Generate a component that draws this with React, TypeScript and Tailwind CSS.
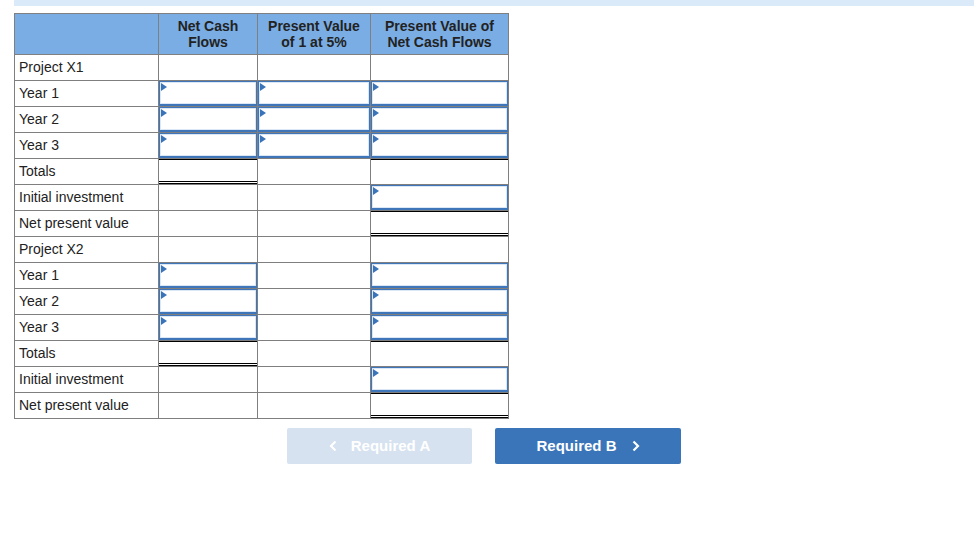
import * as React from "react";

type Cell = "empty" | "input" | "total" | "topline";

type Row = { label: string; cells: [Cell, Cell, Cell] };

const rows: Row[] = [
  { label: "Project X1", cells: ["empty", "empty", "empty"] },
  { label: "Year 1", cells: ["input", "input", "input"] },
  { label: "Year 2", cells: ["input", "input", "input"] },
  { label: "Year 3", cells: ["input", "input", "input"] },
  { label: "Totals", cells: ["total", "empty", "topline"] },
  { label: "Initial investment", cells: ["empty", "empty", "input"] },
  { label: "Net present value", cells: ["empty", "empty", "total"] },
  { label: "Project X2", cells: ["empty", "empty", "empty"] },
  { label: "Year 1", cells: ["input", "empty", "input"] },
  { label: "Year 2", cells: ["input", "empty", "input"] },
  { label: "Year 3", cells: ["input", "empty", "input"] },
  { label: "Totals", cells: ["total", "empty", "topline"] },
  { label: "Initial investment", cells: ["empty", "empty", "input"] },
  { label: "Net present value", cells: ["empty", "empty", "total"] },
];

function InputBox() {
  return (
    <div className="relative h-full w-full border border-b-2 border-[#3f76ba] bg-white shadow-[inset_0_0_0_1px_#dbe7f5]">
      <span className="absolute left-[1px] top-[1px] h-0 w-0 border-y-[4px] border-l-[6px] border-y-transparent border-l-[#3b73b9]" />
    </div>
  );
}

function DataCell({ kind }: { kind: Cell }) {
  return (
    <div className="h-[26px] border-r border-b border-[#7f7f7f]">
      {kind === "input" && <InputBox />}
      {kind === "total" && <div className="h-full border-t border-b-[3px] border-black" style={{ borderBottomStyle: "double" }} />}
      {kind === "topline" && <div className="h-full border-t border-black" />}
    </div>
  );
}

export default function App() {
  return (
    <div className="min-h-screen bg-white text-[#222] font-['Liberation_Sans',Arial,sans-serif]">
      <div className="ml-[14px] h-[6px] bg-[#daeaf8]" />

      <div className="ml-[14px] mt-[7px] grid w-[495px] grid-cols-[144px_99px_113px_138px] border-l border-t border-[#7f7f7f]">
        <div className="h-[41px] border-r border-b border-[#7f7f7f] bg-[#7aade4]" />
        <div className="flex h-[41px] items-center justify-center border-r border-b border-[#7f7f7f] bg-[#7aade4] text-center text-[14px] font-bold leading-[16px]">
          Net Cash
          <br />
          Flows
        </div>
        <div className="flex h-[41px] items-center justify-center border-r border-b border-[#7f7f7f] bg-[#7aade4] text-center text-[14px] font-bold leading-[16px]">
          Present Value
          <br />
          of 1 at 5%
        </div>
        <div className="flex h-[41px] items-center justify-center border-r border-b border-[#7f7f7f] bg-[#7aade4] text-center text-[14px] font-bold leading-[16px]">
          Present Value of
          <br />
          Net Cash Flows
        </div>

        {rows.map((r, i) => (
          <React.Fragment key={i}>
            <div className="flex h-[26px] items-center border-r border-b border-[#7f7f7f] pl-[4px] text-[14px]">
              {r.label}
            </div>
            {r.cells.map((c, j) => (
              <DataCell key={j} kind={c} />
            ))}
          </React.Fragment>
        ))}
      </div>

      <div className="mt-[9px] flex gap-[23px] pl-[287px]">
        <button className="flex h-[36px] w-[185px] items-center justify-center gap-[14px] rounded-[2px] bg-[#d6e2f0] text-[15px] font-bold text-white">
          <svg width="8" height="12" viewBox="0 0 8 12" fill="none">
            <polyline points="6.5,1.5 2,6 6.5,10.5" stroke="white" strokeWidth="2.2" />
          </svg>
          Required A
        </button>
        <button className="flex h-[36px] w-[186px] items-center justify-center gap-[15px] rounded-[2px] bg-[#3a75b9] text-[15px] font-bold text-white">
          Required B
          <svg width="8" height="12" viewBox="0 0 8 12" fill="none">
            <polyline points="1.5,1.5 6,6 1.5,10.5" stroke="white" strokeWidth="2.2" />
          </svg>
        </button>
      </div>
    </div>
  );
}
